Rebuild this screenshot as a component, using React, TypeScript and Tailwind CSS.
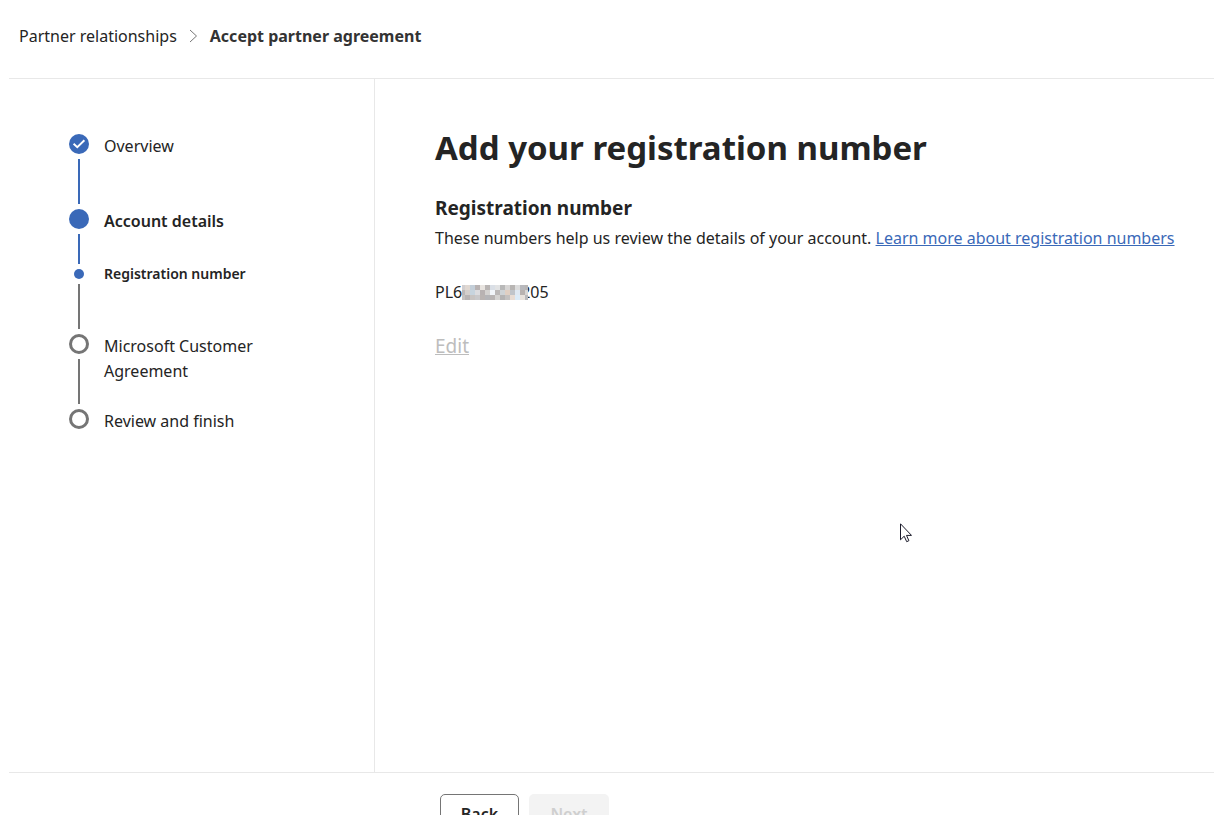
import React from 'react';

type StepState = 'done' | 'current' | 'sub' | 'todo';

interface Step {
  label: string;
  state: StepState;
  rowClass: string;
  lineClass?: string;
}

const STEPS: Step[] = [
  { label: 'Overview', state: 'done', rowClass: 'h-[75px]', lineClass: 'bg-[#3a69b8]' },
  { label: 'Account details', state: 'current', rowClass: 'h-[60px]', lineClass: 'bg-[#3a69b8]' },
  { label: 'Registration number', state: 'sub', rowClass: 'h-[65px]', lineClass: 'bg-[#757575]' },
  { label: 'Microsoft Customer Agreement', state: 'todo', rowClass: 'h-[75px]', lineClass: 'bg-[#757575]' },
  { label: 'Review and finish', state: 'todo', rowClass: '' },
];

const LABEL_CLASSES: Record<StepState, string> = {
  done: 'text-base leading-[25px]',
  current: 'text-base leading-[25px] font-semibold',
  sub: 'text-sm leading-[10px] font-semibold',
  todo: 'text-base leading-[25px]',
};

// Redacted digits, one colour per 5px cell
const MOSAIC = [
  ['#d2cfd0', '#e0d8d2', '#c3ced8', '#b8b2b2', '#e8e4e0', '#b9b5b4', '#dadfe6', '#e2e3e4', '#b8b8b8', '#d7d5d4', '#b8b5b3', '#dcdcdc', '#b8b9bd', '#b9b6b4'],
  ['#bcb8b8', '#d4cfcc', '#c7d4de', '#dcdcdf', '#b8b2b2', '#d4d2d0', '#f2f5fa', '#bcb8b8', '#cfd3d6', '#e0cfc3', '#c0c4ca', '#dfe8f2', '#b8b2b0', '#d8d6d4'],
  ['#c6c2c0', '#b8b4b4', '#c8c4c2', '#c9c9cb', '#bab4b2', '#b5b5b8', '#b9b4b4', '#d5d3d2', '#b5b3b3', '#c4c1c0', '#e8dcd4', '#dcebf8', '#e8e2dc', '#b9b9bc'],
];

function StepMarker({ state }: { state: StepState }) {
  if (state === 'done') {
    return (
      <svg className="size-5 shrink-0" viewBox="0 0 20 20" aria-hidden="true">
        <circle cx="10" cy="10" r="10" fill="#3a69b8" />
        <path d="M4.600 9.800l3.700 3.500L15.400 6.300" fill="none" stroke="#fff" strokeWidth="1.900" />
      </svg>
    );
  }
  if (state === 'current') return <span className="size-5 shrink-0 rounded-full bg-[#3a69b8]" />;
  if (state === 'sub') return <span className="size-[10px] shrink-0 rounded-full bg-[#3a69b8]" />;
  return <span className="size-5 shrink-0 rounded-full border-[3px] border-[#757575]" />;
}

function Stepper() {
  return (
    <ol>
      {STEPS.map((step) => (
        <li key={step.label} className={`flex gap-[15px] ${step.rowClass}`}>
          <div className="flex w-5 shrink-0 flex-col items-center gap-[5px] pb-[5px]">
            <StepMarker state={step.state} />
            {step.lineClass && <span className={`w-[2px] grow ${step.lineClass}`} />}
          </div>
          <span className={LABEL_CLASSES[step.state]}>{step.label}</span>
        </li>
      ))}
    </ol>
  );
}

function Mosaic() {
  return (
    <svg className="relative -mr-[7px] h-[15px] w-[66px]" viewBox="0 0 66 15" shapeRendering="crispEdges" aria-hidden="true">
      {MOSAIC.map((row, y) =>
        row.map((fill, x) => <rect key={`${x}-${y}`} x={x * 5 - 2} y={y * 5} width="5" height="5" fill={fill} />)
      )}
    </svg>
  );
}

export default function App() {
  return (
    <div className="h-screen overflow-hidden bg-white font-['Noto_Sans','Open_Sans',sans-serif] text-[#242424]">
      <div className="flex min-h-[calc(100vh+40px)] flex-col pl-[9px]">
        <header className="border-b border-[#e8e8e8] px-[10px] pt-6 pb-[30px]">
          <nav aria-label="Breadcrumb" className="flex items-center text-base leading-6">
            <a href="#relationships">Partner relationships</a>
            <svg className="mx-3 h-[14px] w-[9px]" viewBox="0 0 9 14" fill="none" stroke="#777" aria-hidden="true">
              <path d="M1 1l6.500 6L1 13" />
            </svg>
            <span className="font-bold text-[#333]" aria-current="page">Accept partner agreement</span>
          </nav>
        </header>

        <div className="flex grow">
          <aside className="w-[366px] shrink-0 border-r border-[#e8e8e8] pt-[55px] pr-[100px] pl-[60px]">
            <Stepper />
          </aside>

          <main className="grow pt-[45px] pl-[60px]">
            <h1 className="text-[33px] leading-[48px] font-bold">Add your registration number</h1>
            <h2 className="mt-[21px] text-[19px] leading-[30px] font-bold">Registration number</h2>
            <p className="text-base leading-[30px]">
              These numbers help us review the details of your account.{' '}
              <a href="#learn" className="text-[#3a69b8] underline">Learn more about registration numbers</a>
            </p>
            <div className="mt-6 flex items-center text-base leading-[30px]">
              <span>PL6</span>
              <Mosaic />
              <span>205</span>
            </div>
            <button type="button" disabled className="mt-6 text-[19px] leading-[30px] text-[#bdbdbd] underline">
              Edit
            </button>
          </main>
        </div>

        <footer className="flex h-[83px] gap-[10px] border-t border-[#e8e8e8] pt-[21px] pl-[431px]">
          <button type="button" className="h-10 w-[79px] rounded-[5px] border border-[#757575] text-base font-semibold">
            Back
          </button>
          <button type="button" disabled className="h-10 w-20 rounded-[5px] bg-[#f3f3f3] text-base font-semibold text-[#cfcfcf]">
            Next
          </button>
        </footer>
      </div>

      <svg className="pointer-events-none absolute top-[523px] left-[900px] h-5 w-3" viewBox="0 0 12 20" aria-hidden="true">
        <path
          d="M.5.800v16l3.700-3.600 2.500 5.500 2.200-1-2.400-5.300h5z"
          fill="#fff"
          stroke="#1a1a2a"
        />
      </svg>
    </div>
  );
}
